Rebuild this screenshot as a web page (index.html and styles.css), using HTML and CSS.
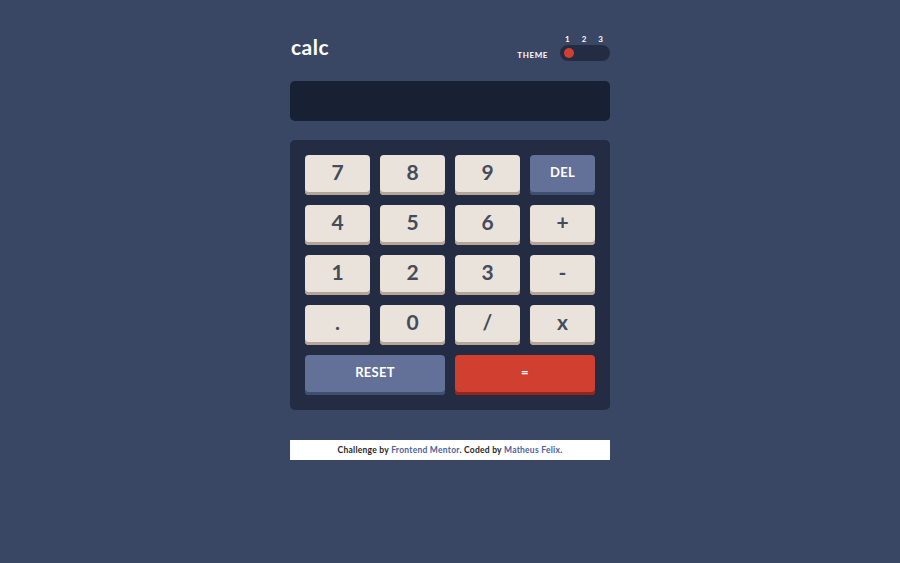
FILE: index.html
```html
<!DOCTYPE html>
<html lang="en">
<head>
<meta charset="utf-8">
<title>Calculator app</title>
<link rel="stylesheet" href="styles.css">
</head>
<body>
<main class="calc">
  <header class="top">
    <h1 class="logo">calc</h1>
    <div class="theme">
      <span class="theme-label">THEME</span>
      <div class="theme-switch">
        <div class="theme-nums"><span>1</span><span>2</span><span>3</span></div>
        <div class="track"><span class="knob"></span></div>
      </div>
    </div>
  </header>
  <div class="screen"></div>
  <section class="keypad">
    <button class="key">7</button>
    <button class="key">8</button>
    <button class="key">9</button>
    <button class="key key-alt small">DEL</button>
    <button class="key">4</button>
    <button class="key">5</button>
    <button class="key">6</button>
    <button class="key">+</button>
    <button class="key">1</button>
    <button class="key">2</button>
    <button class="key">3</button>
    <button class="key">-</button>
    <button class="key">.</button>
    <button class="key">0</button>
    <button class="key">/</button>
    <button class="key">x</button>
    <button class="key key-alt small wide">RESET</button>
    <button class="key key-eq small wide">=</button>
  </section>
  <footer class="attribution">
    Challenge by <a href="#">Frontend Mentor</a>. Coded by <a href="#">Matheus Felix</a>.
  </footer>
</main>
</body>
</html>
```
FILE: styles.css
```css
* { box-sizing: border-box; }

html, body {
  margin: 0;
  height: 100%;
}

body {
  background: #3a4764;
  font-family: "Lato", "Open Sans", sans-serif;
  font-weight: 700;
  display: flex;
  justify-content: center;
}

.calc {
  width: 320px;
  padding-top: 35px;
  display: flex;
  flex-direction: column;
}

.top {
  display: flex;
  justify-content: space-between;
  align-items: flex-end;
  height: 26px;
  padding-left: 1px;
}

.logo {
  margin: 0 0 2px;
  color: #ffffff;
  font-size: 21px;
  line-height: 24px;
  font-weight: 700;
  letter-spacing: 0.5px;
}

.theme {
  display: flex;
  align-items: flex-end;
  gap: 12px;
}

.theme-label {
  color: #ffffff;
  font-size: 8px;
  letter-spacing: 0.6px;
  line-height: 10px;
  margin-bottom: 1px;
}

.theme-switch {
  display: flex;
  flex-direction: column;
  width: 50px;
}

.theme-nums {
  display: flex;
  justify-content: space-between;
  padding: 0 7px 0 5px;
  color: #ffffff;
  font-size: 8px;
  line-height: 10px;
  margin-bottom: 1px;
}

.track {
  height: 16px;
  border-radius: 8px;
  background: #232c43;
  display: flex;
  align-items: center;
  padding-left: 4px;
}

.knob {
  width: 10px;
  height: 10px;
  border-radius: 50%;
  background: #d03f2f;
}

.screen {
  margin-top: 20px;
  height: 40px;
  background: #182034;
  border-radius: 5px;
}

.keypad {
  margin-top: 19px;
  background: #232c43;
  border-radius: 5px;
  padding: 15px;
  display: grid;
  grid-template-columns: repeat(4, 1fr);
  gap: 10px;
}

.key {
  height: 40px;
  border: none;
  border-radius: 4px;
  background: #eae3dc;
  box-shadow: inset 0 -3px 0 #b4a597;
  color: #444b5a;
  font-family: inherit;
  font-weight: 700;
  font-size: 21px;
  padding: 0 0 7px;
  cursor: pointer;
}

.key.small {
  font-size: 13px;
  letter-spacing: 0.3px;
}

.key-alt {
  background: #637097;
  box-shadow: inset 0 -3px 0 #404e72;
  color: #ffffff;
}

.key-eq {
  background: #d03f2f;
  box-shadow: inset 0 -3px 0 #93261a;
  color: #ffffff;
}

.wide {
  grid-column: span 2;
}

.attribution {
  margin-top: 30px;
  height: 20px;
  background: #ffffff;
  color: #1f1f1f;
  font-size: 8.5px;
  letter-spacing: 0.25px;
  line-height: 20px;
  text-align: center;
}

.attribution a {
  color: #4d5f9a;
  text-decoration: none;
}
```
